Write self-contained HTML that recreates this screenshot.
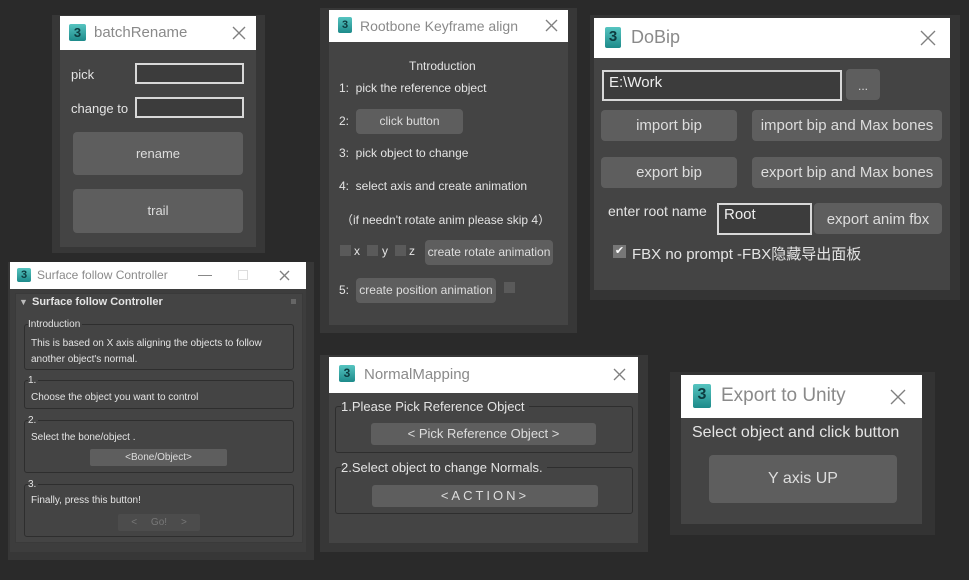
<!DOCTYPE html>
<html><head><meta charset="utf-8"><style>
*{box-sizing:border-box;margin:0;padding:0}
body{width:969px;height:580px;background:#2a2a2a;position:relative;overflow:hidden;font-family:"Liberation Sans","Noto Sans CJK SC",sans-serif;color:#ddd}
.a{position:absolute}
.frame{position:absolute;background:#373737}
.win{position:absolute;background:#444}
.title{position:absolute;left:0;top:0;right:0;background:#fff;color:#8a8a8a;white-space:nowrap}
.ic{position:absolute;background:linear-gradient(#56c4c0,#1d8a8a);color:#0d3b3f;font-weight:bold;text-align:center;border-radius:2px}
.x{position:absolute}
.x line{stroke:#808080;stroke-width:1.3}
.btn{position:absolute;background:#5e5e5e;border-radius:4px;color:#ddd;text-align:center;white-space:nowrap}
.inp{position:absolute;background:#3c3c3c;border:2px solid #d8d8d8;color:#eee}
.t{position:absolute;white-space:nowrap;color:#e4e4e4}
.grp{position:absolute;border:1px solid #2e2e2e;border-radius:3px;background:#444}
.cb{position:absolute;background:#5a5a5a;width:11px;height:11px}
</style></head><body>

<!-- batchRename -->
<div class="frame" style="left:52px;top:15px;width:213px;height:238px"></div>
<div class="win" style="left:60px;top:16px;width:196px;height:231px">
 <div class="title" style="height:34px"><div class="ic" style="left:9px;top:8px;width:17px;height:17px;font-size:13px;line-height:17px">3</div><span class="a" style="left:34px;top:8px;font-size:15px">batchRename</span><svg class="x" style="left:172px;top:10px" width="14" height="14"><line x1="1" y1="1" x2="13" y2="13"/><line x1="13" y1="1" x2="1" y2="13"/></svg></div>
 <div class="t" style="left:11px;top:51px;font-size:13px">pick</div>
 <div class="inp" style="left:75px;top:47px;width:109px;height:21px"></div>
 <div class="t" style="left:11px;top:85px;font-size:13px">change to</div>
 <div class="inp" style="left:75px;top:81px;width:109px;height:21px"></div>
 <div class="btn" style="left:13px;top:116px;width:170px;height:43px;line-height:43px;font-size:13px">rename</div>
 <div class="btn" style="left:13px;top:173px;width:170px;height:44px;line-height:44px;font-size:13px">trail</div>
</div>

<!-- Surface follow -->
<div class="frame" style="left:8px;top:262px;width:306px;height:298px"></div>
<div class="win" style="left:10px;top:262px;width:296px;height:290px;background:#3d3d3d">
 <div class="title" style="height:27px"><div class="ic" style="left:7px;top:6px;width:14px;height:14px;font-size:11px;line-height:14px">3</div><span class="a" style="left:27px;top:6px;font-size:12px">Surface follow Controller</span><span class="a" style="left:188px;top:13px;width:14px;height:1px;background:#888"></span><span class="a" style="left:228px;top:8px;width:10px;height:10px;border:1px solid #ddd"></span><svg class="x" style="left:269px;top:8px" width="11" height="11"><line x1="1" y1="1" x2="10" y2="10"/><line x1="10" y1="1" x2="1" y2="10"/></svg></div>
 <div class="a" style="left:5px;top:31px;width:288px;height:250px;background:#444;border:1px solid #3a3a3a"></div>
 <div class="t" style="left:9px;top:35px;font-size:9px;color:#bbb">▼</div>
 <div class="t" style="left:22px;top:34px;font-size:11px;font-weight:bold">Surface follow Controller</div>
 <div class="a" style="left:281px;top:37px;width:5px;height:5px;background:#666"></div>
 <div class="grp" style="left:14px;top:62px;width:270px;height:46px"></div>
 <div class="t" style="left:18px;top:57px;font-size:10px;background:#444;padding-right:2px">Introduction</div>
 <div class="t" style="left:21px;top:74px;font-size:10px;line-height:16px">This is based on X axis aligning the objects to follow<br>another object's normal.</div>
 <div class="grp" style="left:14px;top:118px;width:270px;height:29px"></div>
 <div class="t" style="left:18px;top:113px;font-size:10px;background:#444;padding-right:2px">1.</div>
 <div class="t" style="left:21px;top:130px;font-size:10px">Choose the object you want to control</div>
 <div class="grp" style="left:14px;top:158px;width:270px;height:53px"></div>
 <div class="t" style="left:18px;top:153px;font-size:10px;background:#444;padding-right:2px">2.</div>
 <div class="t" style="left:21px;top:170px;font-size:10px">Select the bone/object .</div>
 <div class="btn" style="left:80px;top:187px;width:137px;height:17px;line-height:17px;font-size:10px;border-radius:2px">&lt;Bone/Object&gt;</div>
 <div class="grp" style="left:14px;top:222px;width:270px;height:53px"></div>
 <div class="t" style="left:18px;top:217px;font-size:10px;background:#444;padding-right:2px">3.</div>
 <div class="t" style="left:21px;top:233px;font-size:10px">Finally, press this button!</div>
 <div class="btn" style="left:108px;top:252px;width:82px;height:17px;line-height:17px;font-size:10px;background:#4c4c4c;color:#777;border-radius:2px">&lt;&nbsp;&nbsp;&nbsp;&nbsp;&nbsp;Go!&nbsp;&nbsp;&nbsp;&nbsp;&nbsp;&gt;</div>
</div>

<!-- Rootbone -->
<div class="frame" style="left:320px;top:8px;width:257px;height:325px"></div>
<div class="win" style="left:329px;top:10px;width:239px;height:315px">
 <div class="title" style="height:32px"><div class="ic" style="left:9px;top:7px;width:14px;height:16px;font-size:11px;line-height:16px">3</div><span class="a" style="left:31px;top:8px;font-size:14px">Rootbone Keyframe align</span><svg class="x" style="left:216px;top:9px" width="13" height="13"><line x1="1" y1="1" x2="12" y2="12"/><line x1="12" y1="1" x2="1" y2="12"/></svg></div>
 <div class="t" style="left:80px;top:49px;font-size:12px">Tntroduction</div>
 <div class="t" style="left:10px;top:71px;font-size:12px">1:&nbsp; pick the reference object</div>
 <div class="t" style="left:10px;top:104px;font-size:12px">2:</div>
 <div class="btn" style="left:27px;top:99px;width:107px;height:25px;line-height:25px;font-size:12px">click button</div>
 <div class="t" style="left:10px;top:136px;font-size:12px">3:&nbsp; pick object to change</div>
 <div class="t" style="left:10px;top:169px;font-size:12px">4:&nbsp; select axis and create animation</div>
 <div class="t" style="left:12px;top:201px;font-size:12px">（if needn't rotate anim please skip 4）</div>
 <div class="cb" style="left:11px;top:235px"></div><div class="t" style="left:25px;top:234px;font-size:12px">x</div>
 <div class="cb" style="left:38px;top:235px"></div><div class="t" style="left:53px;top:234px;font-size:12px">y</div>
 <div class="cb" style="left:66px;top:235px"></div><div class="t" style="left:80px;top:234px;font-size:12px">z</div>
 <div class="btn" style="left:96px;top:230px;width:128px;height:25px;line-height:25px;font-size:12px">create rotate animation</div>
 <div class="t" style="left:10px;top:273px;font-size:12px">5:</div>
 <div class="btn" style="left:27px;top:268px;width:140px;height:25px;line-height:25px;font-size:12px">create position animation</div>
 <div class="cb" style="left:175px;top:272px"></div>
</div>

<!-- DoBip -->
<div class="frame" style="left:590px;top:15px;width:370px;height:285px;background:#343434"></div>
<div class="win" style="left:594px;top:18px;width:356px;height:272px">
 <div class="title" style="height:40px"><div class="ic" style="left:11px;top:9px;width:16px;height:21px;font-size:15px;line-height:19px">3</div><span class="a" style="left:37px;top:9px;font-size:18px">DoBip</span><svg class="x" style="left:326px;top:12px" width="16" height="16"><line x1="1" y1="1" x2="15" y2="15"/><line x1="15" y1="1" x2="1" y2="15"/></svg></div>
 <div class="inp" style="left:8px;top:52px;width:240px;height:31px;padding:2px 5px;font-size:15px">E:\Work</div>
 <div class="btn" style="left:252px;top:51px;width:34px;height:31px;line-height:34px;font-size:12px">...</div>
 <div class="btn" style="left:7px;top:92px;width:136px;height:31px;line-height:31px;font-size:15px">import bip</div>
 <div class="btn" style="left:158px;top:92px;width:190px;height:31px;line-height:31px;font-size:15px">import bip and Max bones</div>
 <div class="btn" style="left:7px;top:139px;width:136px;height:31px;line-height:31px;font-size:15px">export bip</div>
 <div class="btn" style="left:158px;top:139px;width:190px;height:31px;line-height:31px;font-size:15px">export bip and Max bones</div>
 <div class="t" style="left:14px;top:185px;font-size:14px">enter root name</div>
 <div class="inp" style="left:123px;top:185px;width:95px;height:32px;padding:1px 5px;font-size:15px">Root</div>
 <div class="btn" style="left:220px;top:185px;width:128px;height:31px;line-height:34px;font-size:15px">export anim fbx</div>
 <div class="a" style="left:19px;top:227px;width:13px;height:13px;background:#777;color:#fff;font-size:11px;line-height:13px;text-align:center">✔</div>
 <div class="t" style="left:38px;top:225px;font-size:15px">FBX no prompt -FBX隐藏导出面板</div>
</div>

<!-- NormalMapping -->
<div class="frame" style="left:320px;top:355px;width:328px;height:197px"></div>
<div class="win" style="left:329px;top:357px;width:309px;height:186px">
 <div class="title" style="height:36px"><div class="ic" style="left:10px;top:8px;width:16px;height:17px;font-size:12px;line-height:17px">3</div><span class="a" style="left:35px;top:9px;font-size:15px">NormalMapping</span><svg class="x" style="left:284px;top:11px" width="13" height="13"><line x1="1" y1="1" x2="12" y2="12"/><line x1="12" y1="1" x2="1" y2="12"/></svg></div>
 <div class="grp" style="left:6px;top:49px;width:298px;height:47px"></div>
 <div class="t" style="left:12px;top:42px;font-size:13px;background:#444;padding-right:4px">1.Please Pick Reference Object</div>
 <div class="btn" style="left:42px;top:66px;width:225px;height:22px;line-height:22px;font-size:13px;border-radius:3px">&lt; Pick Reference Object &gt;</div>
 <div class="grp" style="left:6px;top:110px;width:298px;height:47px"></div>
 <div class="t" style="left:12px;top:103px;font-size:13px;background:#444;padding-right:4px">2.Select object to change Normals.</div>
 <div class="btn" style="left:43px;top:128px;width:226px;height:22px;line-height:22px;font-size:13px;letter-spacing:3px;border-radius:3px">&lt;ACTION&gt;</div>
</div>

<!-- Export to Unity -->
<div class="frame" style="left:670px;top:372px;width:265px;height:163px;background:#333"></div>
<div class="win" style="left:681px;top:375px;width:241px;height:149px">
 <div class="title" style="height:43px"><div class="ic" style="left:12px;top:9px;width:18px;height:24px;font-size:16px;line-height:22px">3</div><span class="a" style="left:40px;top:10px;font-size:19px">Export to Unity</span><svg class="x" style="left:209px;top:14px" width="16" height="16"><line x1="1" y1="1" x2="15" y2="15"/><line x1="15" y1="1" x2="1" y2="15"/></svg></div>
 <div class="t" style="left:11px;top:49px;font-size:16px">Select object and click button</div>
 <div class="btn" style="left:28px;top:80px;width:188px;height:48px;line-height:48px;font-size:16px">Y axis UP</div>
</div>
</body></html>
